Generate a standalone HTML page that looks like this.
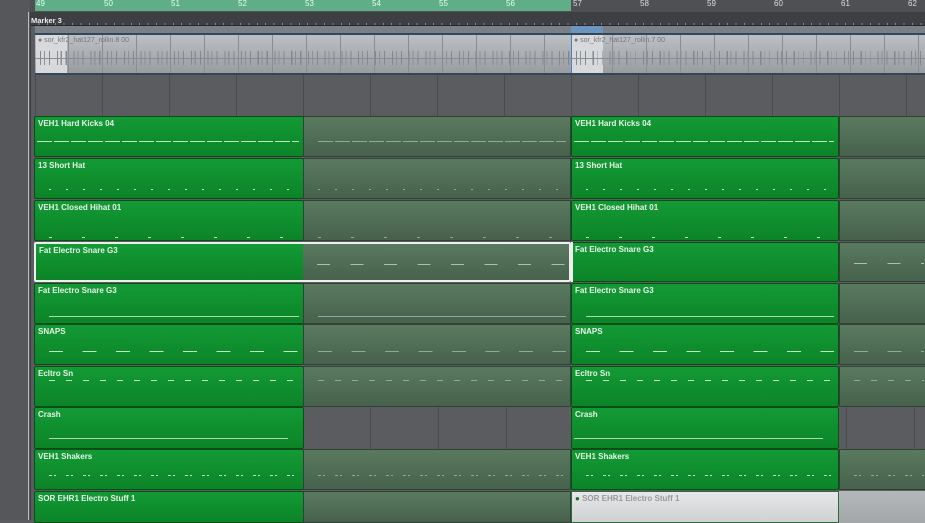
<!DOCTYPE html><html><head><style>
*{margin:0;padding:0;box-sizing:border-box}
body{width:925px;height:520px;overflow:hidden;background:#5b5c60;position:relative;font-family:"Liberation Sans",sans-serif}
.a{position:absolute}
.left{left:0;top:0;width:30px;height:520px;background:#56575a}
.vl{width:1px;background:#3c3d40;top:12px;bottom:0}
.g{background:linear-gradient(#139a35,#0c8428);border:1px solid #0a4d18;border-radius:2px;color:#e8f5e8;font-size:8px;font-weight:bold;padding:2px 3px}
.l{background:linear-gradient(#5a7a60,#47614c);border:1px solid #2f4233}
.d{position:absolute;left:14px;right:4px;height:1px}
</style></head><body>
<div class="a left"></div>
<div class="a" style="left:30px;top:0;width:895px;height:12px;background:#4f5053"></div>
<div class="a" style="left:35px;top:0;width:536px;height:11px;background:#5fae88"></div>
<div class="a" style="left:30px;top:12px;width:895px;height:14px;background:#3e3f42;border-bottom:1px solid #2a2a2c;background-image:repeating-linear-gradient(90deg,#8a8a8a 0 1px,transparent 1px 8.4px);background-size:100% 3px;background-repeat:no-repeat;background-position:0 11px"></div>
<div class="a" style="left:31px;top:16px;font-size:7.5px;font-weight:bold;color:#eee">Marker 3</div>
<div class="a" style="left:35px;top:26px;width:890px;height:7px;background:#7a8088"></div>
<div class="a" style="left:571px;top:26px;width:32px;height:7px;background:#6d93c0"></div>
<div class="a" style="left:36px;top:-1px;font-size:8px;color:#dfe;">49</div>
<div class="a" style="left:104px;top:-1px;font-size:8px;color:#dfe;">50</div>
<div class="a" style="left:171px;top:-1px;font-size:8px;color:#dfe;">51</div>
<div class="a" style="left:238px;top:-1px;font-size:8px;color:#dfe;">52</div>
<div class="a" style="left:305px;top:-1px;font-size:8px;color:#dfe;">53</div>
<div class="a" style="left:372px;top:-1px;font-size:8px;color:#dfe;">54</div>
<div class="a" style="left:439px;top:-1px;font-size:8px;color:#dfe;">55</div>
<div class="a" style="left:506px;top:-1px;font-size:8px;color:#dfe;">56</div>
<div class="a" style="left:573px;top:-1px;font-size:8px;color:#ddd;">57</div>
<div class="a" style="left:640px;top:-1px;font-size:8px;color:#ddd;">58</div>
<div class="a" style="left:707px;top:-1px;font-size:8px;color:#ddd;">59</div>
<div class="a" style="left:774px;top:-1px;font-size:8px;color:#ddd;">60</div>
<div class="a" style="left:841px;top:-1px;font-size:8px;color:#ddd;">61</div>
<div class="a" style="left:908px;top:-1px;font-size:8px;color:#ddd;">62</div>
<!-- audio -->
<div class="a" style="left:35px;top:33px;width:890px;height:42px;border-top:2px solid #34465a;border-bottom:2px solid #34465a;background-image:repeating-linear-gradient(90deg,transparent 0 33px,#8a8d92 33px 34px),linear-gradient(#bcbfc3,#999ca0)"></div>
<div class="a" style="left:36px;top:35px;width:31px;height:38px;background:#d7d9dc"></div>
<div class="a" style="left:571px;top:35px;width:32px;height:38px;background:#d7d9dc;border-left:1px solid #4a82c0"></div>
<div class="a" style="left:35px;top:58px;width:890px;height:1px;background:#8a8c90"></div>
<div class="a" style="left:35px;top:51px;width:890px;height:14px;background:repeating-linear-gradient(90deg,transparent 0 5px,#85888c 5px 6px,transparent 6px 9px,#8d9094 9px 10px,transparent 10px 14px,#85888c 14px 15px,transparent 15px 16.75px)"></div>
<div class="a" style="left:38px;top:37px;font-size:7px;color:#777">● sor_kfr2_hat127_rollin.8 00</div>
<div class="a" style="left:574px;top:37px;font-size:7px;color:#777">● sor_kfr2_hat127_rollin.7 00</div>
<div class="a" style="left:35px;top:75px;width:890px;height:41px;background:repeating-linear-gradient(90deg,#4a4b4e 0 1px,transparent 1px 67px)"></div>
<div class="a vl" style="left:30px"></div>
<div class="a" style="left:28px;top:12px;width:1px;height:508px;background:#bbb"></div>

<div class="a g" style="left:34px;top:116px;width:270px;height:41px">VEH1 Hard Kicks 04<div class="d" style="top:24px;left:2px;background:repeating-linear-gradient(90deg,#bfe8c6 0 15px,transparent 15px 17px)"></div></div>
<div class="a l" style="left:303px;top:116px;width:268px;height:41px"><div class="d" style="top:24px;background:repeating-linear-gradient(90deg,#8fa897 0 15px,transparent 15px 17px)"></div></div>
<div class="a g" style="left:571px;top:116px;width:268px;height:41px">VEH1 Hard Kicks 04<div class="d" style="top:24px;left:2px;background:repeating-linear-gradient(90deg,#bfe8c6 0 15px,transparent 15px 17px)"></div></div>
<div class="a l" style="left:839px;top:116px;width:90px;height:41px"></div>

<div class="a g" style="left:34px;top:158px;width:270px;height:41px">13 Short Hat<div class="d" style="top:30px;background:repeating-linear-gradient(90deg,#bfe8c6 0 2px,transparent 2px 17px)"></div></div>
<div class="a l" style="left:303px;top:158px;width:268px;height:41px"><div class="d" style="top:30px;background:repeating-linear-gradient(90deg,#8fa897 0 2px,transparent 2px 17px)"></div></div>
<div class="a g" style="left:571px;top:158px;width:268px;height:41px">13 Short Hat<div class="d" style="top:30px;background:repeating-linear-gradient(90deg,#bfe8c6 0 2px,transparent 2px 17px)"></div></div>
<div class="a l" style="left:839px;top:158px;width:90px;height:41px"></div>

<div class="a g" style="left:34px;top:200px;width:270px;height:41px">VEH1 Closed Hihat 01<div class="d" style="top:36px;background:repeating-linear-gradient(90deg,#bfe8c6 0 3px,transparent 3px 33px)"></div></div>
<div class="a l" style="left:303px;top:200px;width:268px;height:41px"><div class="d" style="top:36px;background:repeating-linear-gradient(90deg,#8fa897 0 3px,transparent 3px 33px)"></div></div>
<div class="a g" style="left:571px;top:200px;width:268px;height:41px">VEH1 Closed Hihat 01<div class="d" style="top:36px;background:repeating-linear-gradient(90deg,#bfe8c6 0 3px,transparent 3px 33px)"></div></div>
<div class="a l" style="left:839px;top:200px;width:90px;height:41px"></div>

<div class="a g" style="left:34px;top:242px;width:537px;height:40px;border:2px solid #eee;background:none"></div>
<div class="a g" style="left:36px;top:244px;width:267px;height:36px;border:none">Fat Electro Snare G3</div>
<div class="a l" style="left:303px;top:244px;width:266px;height:36px;border:none"><div class="d" style="top:20px;background:repeating-linear-gradient(90deg,#a9bfb0 0 13px,transparent 13px 33.5px)"></div></div>
<div class="a g" style="left:571px;top:242px;width:268px;height:40px">Fat Electro Snare G3</div>
<div class="a l" style="left:839px;top:242px;width:90px;height:40px"><div class="d" style="top:20px;background:repeating-linear-gradient(90deg,#a9bfb0 0 13px,transparent 13px 33.5px)"></div></div>
<div class="a" style="left:571px;top:242px;width:2px;height:40px;background:#eee"></div>

<div class="a g" style="left:34px;top:283px;width:270px;height:41px">Fat Electro Snare G3<div class="d" style="top:32px;background:#a9d9b0"></div></div>
<div class="a l" style="left:303px;top:283px;width:268px;height:41px"><div class="d" style="top:32px;background:#8fa897"></div></div>
<div class="a g" style="left:571px;top:283px;width:268px;height:41px">Fat Electro Snare G3<div class="d" style="top:32px;left:14px;background:#a9d9b0"></div></div>
<div class="a l" style="left:839px;top:283px;width:90px;height:41px"></div>

<div class="a g" style="left:34px;top:324px;width:270px;height:41px">SNAPS<div class="d" style="top:26px;background:repeating-linear-gradient(90deg,#bfe8c6 0 14px,transparent 14px 33.5px)"></div></div>
<div class="a l" style="left:303px;top:324px;width:268px;height:41px"><div class="d" style="top:26px;background:repeating-linear-gradient(90deg,#8fa897 0 14px,transparent 14px 33.5px)"></div></div>
<div class="a g" style="left:571px;top:324px;width:268px;height:41px">SNAPS<div class="d" style="top:26px;background:repeating-linear-gradient(90deg,#bfe8c6 0 14px,transparent 14px 33.5px)"></div></div>
<div class="a l" style="left:839px;top:324px;width:90px;height:41px"><div class="d" style="top:26px;background:repeating-linear-gradient(90deg,#8fa897 0 14px,transparent 14px 33.5px)"></div></div>

<div class="a g" style="left:34px;top:366px;width:270px;height:41px">Ecltro Sn<div class="d" style="top:13px;background:repeating-linear-gradient(90deg,#bfe8c6 0 6px,transparent 6px 17px)"></div></div>
<div class="a l" style="left:303px;top:366px;width:268px;height:41px"><div class="d" style="top:13px;background:repeating-linear-gradient(90deg,#8fa897 0 6px,transparent 6px 17px)"></div></div>
<div class="a g" style="left:571px;top:366px;width:268px;height:41px">Ecltro Sn<div class="d" style="top:13px;background:repeating-linear-gradient(90deg,#bfe8c6 0 6px,transparent 6px 17px)"></div></div>
<div class="a l" style="left:839px;top:366px;width:90px;height:41px"><div class="d" style="top:13px;background:repeating-linear-gradient(90deg,#8fa897 0 6px,transparent 6px 17px)"></div></div>

<div class="a" style="left:303px;top:407px;width:622px;height:42px;background:#5b5c60;background-image:repeating-linear-gradient(90deg,transparent 0 67px,#4a4b4e 67px 68px)"></div>
<div class="a g" style="left:34px;top:407px;width:270px;height:42px">Crash<div class="d" style="top:30px;right:15px;background:#a9d9b0"></div></div>
<div class="a g" style="left:571px;top:407px;width:268px;height:42px">Crash<div class="d" style="top:30px;left:2px;right:15px;background:#a9d9b0"></div></div>

<div class="a g" style="left:34px;top:449px;width:270px;height:41px">VEH1 Shakers<div class="d" style="top:25px;background:repeating-linear-gradient(90deg,#bfe8c6 0 3px,transparent 3px 5px,#bfe8c6 5px 7px,transparent 7px 17px)"></div></div>
<div class="a l" style="left:303px;top:449px;width:268px;height:41px"><div class="d" style="top:25px;background:repeating-linear-gradient(90deg,#8fa897 0 3px,transparent 3px 5px,#8fa897 5px 7px,transparent 7px 17px)"></div></div>
<div class="a g" style="left:571px;top:449px;width:268px;height:41px">VEH1 Shakers<div class="d" style="top:25px;background:repeating-linear-gradient(90deg,#bfe8c6 0 3px,transparent 3px 5px,#bfe8c6 5px 7px,transparent 7px 17px)"></div></div>
<div class="a l" style="left:839px;top:449px;width:90px;height:41px"><div class="d" style="top:25px;background:repeating-linear-gradient(90deg,#8fa897 0 3px,transparent 3px 5px,#8fa897 5px 7px,transparent 7px 17px)"></div></div>

<div class="a g" style="left:34px;top:491px;width:270px;height:32px">SOR EHR1 Electro Stuff 1</div>
<div class="a l" style="left:303px;top:491px;width:268px;height:32px"></div>
<div class="a" style="left:571px;top:491px;width:268px;height:32px;background:linear-gradient(#e6e7e8,#cfd1d3);border:1px solid #2e6a3a;font-size:8px;font-weight:bold;color:#999;padding:2px 3px"><span style="color:#1a6a30">●</span> SOR EHR1 Electro Stuff 1</div>
<div class="a" style="left:839px;top:491px;width:90px;height:32px;background:linear-gradient(#b5b8ba,#a3a6a8)"></div>
</body></html>
